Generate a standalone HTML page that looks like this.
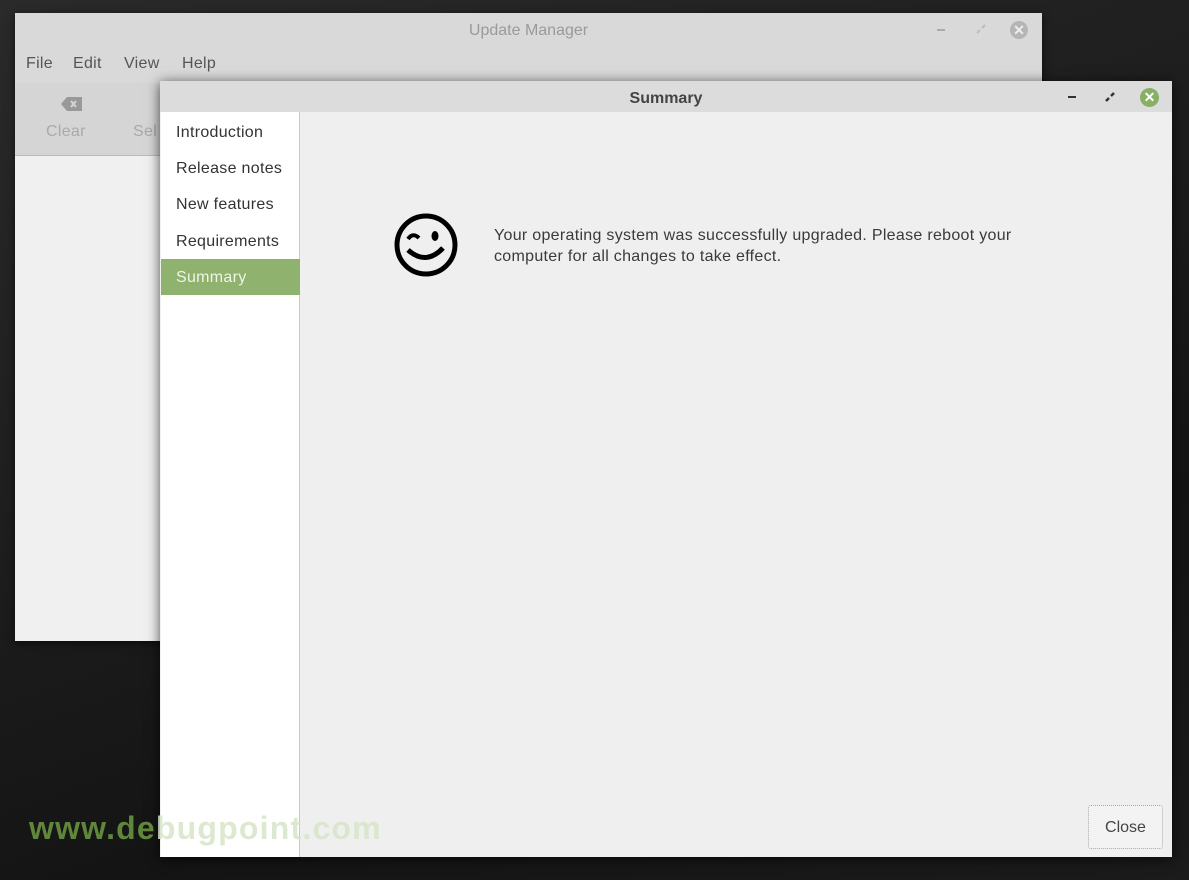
<!DOCTYPE html>
<html><head><meta charset="utf-8"><style>
*{margin:0;padding:0;box-sizing:border-box}
body{width:1189px;height:880px;overflow:hidden;position:relative;font-family:"Liberation Sans",sans-serif;background:linear-gradient(160deg,#2a2a2a 0%,#1e1e1e 40%,#141414 70%,#1b1b1b 100%)}
.abs{position:absolute}
#back{left:15px;top:13px;width:1027px;height:628px;background:#d9d9d9;box-shadow:0 2px 8px rgba(0,0,0,.6)}
#front{left:160px;top:81px;width:1012px;height:776px;background:#efefef;box-shadow:0 2px 12px rgba(0,0,0,.7)}
.t{font-size:16px;color:#555;letter-spacing:0.3px}
</style></head><body>
<div id="back" class="abs">
  <div class="abs" style="left:0;top:9px;width:1027px;text-align:center;font-size:16px;color:#9a9a9a">Update Manager</div>
  <div class="abs" style="left:922px;top:16px;width:8px;height:2px;background:#aaa"></div>
  <svg class="abs" style="left:961px;top:11px" width="10" height="10"><path d="M1 9L4 6M6 4L9 1" stroke="#bbb" stroke-width="2"/></svg>
  <div class="abs" style="left:995px;top:8px;width:18px;height:18px;border-radius:50%;background:#b5b5b5;color:#eee;font-size:14px;font-weight:bold;text-align:center;line-height:18px">✕</div>
  <div class="abs t" style="left:11px;top:42px;color:#555">File</div>
  <div class="abs t" style="left:58px;top:42px">Edit</div>
  <div class="abs t" style="left:109px;top:42px">View</div>
  <div class="abs t" style="left:167px;top:42px">Help</div>
  <div class="abs" style="left:0;top:70px;width:1027px;height:73px;background:#d5d5d5;border-bottom:1px solid #bbb"></div>
  <svg class="abs" style="left:46px;top:84px" width="22" height="14"><path d="M6 0H21V14H6L0 7Z" fill="#999"/><path d="M10 4L15 10M15 4L10 10" stroke="#d5d5d5" stroke-width="2"/></svg>
  <div class="abs t" style="left:31px;top:110px;color:#aaa">Clear</div>
  <div class="abs t" style="left:118px;top:110px;color:#aaa">Sel</div>
  <div class="abs" style="left:0;top:143px;width:1027px;height:485px;background:#f0f0f0"></div>
</div>
<div id="front" class="abs">
  <div class="abs" style="left:0;top:0;width:1012px;height:31px;background:#dcdcdc"></div>
  <div class="abs" style="left:0;top:9px;width:1012px;text-align:center;font-size:16px;font-weight:bold;color:#444">Summary</div>
  <div class="abs" style="left:908px;top:15px;width:8px;height:2px;background:#333"></div>
  <svg class="abs" style="left:945px;top:11px" width="10" height="10"><path d="M1 9L4 6M6 4L9 1" stroke="#333" stroke-width="2.5"/></svg>
  <div class="abs" style="left:980px;top:7px;width:19px;height:19px;border-radius:50%;background:#86b164;color:#fff;font-size:14px;font-weight:bold;text-align:center;line-height:19px">✕</div>
  <div class="abs" style="left:1px;top:31px;width:139px;height:745px;background:#fff;border-right:1px solid #c8c8c8"></div>
  <div class="abs t" style="left:16px;top:43px;color:#333">Introduction</div>
  <div class="abs t" style="left:16px;top:79px;color:#333">Release notes</div>
  <div class="abs t" style="left:16px;top:115px;color:#333">New features</div>
  <div class="abs t" style="left:16px;top:152px;color:#333">Requirements</div>
  <div class="abs" style="left:1px;top:178px;width:139px;height:36px;background:#8fb26f"></div>
  <div class="abs t" style="left:16px;top:188px;color:#eef5e6">Summary</div>
  <svg class="abs" style="left:233px;top:131px" width="66" height="66" viewBox="0 0 66 66"><circle cx="33" cy="33" r="29" fill="none" stroke="#000" stroke-width="5"/><path d="M15 27Q20 20 26 26" fill="none" stroke="#000" stroke-width="4"/><ellipse cx="42" cy="24" rx="3.5" ry="5" fill="#000"/><path d="M15 38Q33 54 50 36" fill="none" stroke="#000" stroke-width="5"/></svg>
  <div class="abs t" style="left:334px;top:144px;color:#3a3a3a;line-height:21px;width:560px">Your operating system was successfully upgraded. Please reboot your computer for all changes to take effect.</div>
  <div class="abs" style="left:928px;top:724px;width:75px;height:44px;border:1px dotted #aaa;border-radius:3px;background:#f3f3f3;text-align:center;line-height:44px;font-size:16px;color:#444">Close</div>
</div>
<div class="abs" style="left:29px;top:810px;font-size:32px;font-weight:bold;color:#6d9a42;opacity:.85;white-space:nowrap;letter-spacing:1.2px">www.de<span style="color:#d7e5c8">bugpoint.com</span></div>
</body></html>
